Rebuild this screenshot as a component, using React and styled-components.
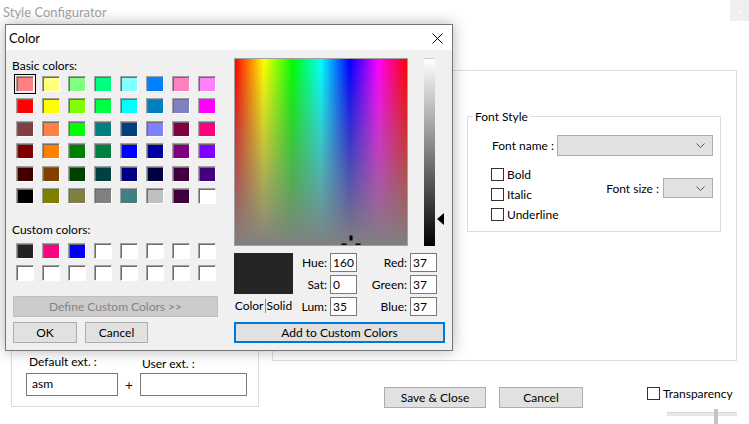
import React from "react";
import styled, { createGlobalStyle } from "styled-components";

const FONT = `"Segoe UI", Lato, "Noto Sans", sans-serif`;

const GlobalStyle = createGlobalStyle`
  html, body { margin: 0; padding: 0; background: #fff; }
  * { box-sizing: border-box; }
`;

const basicColors = [
  "#ff8080", "#ffff80", "#80ff80", "#00ff80", "#80ffff", "#0080ff", "#ff80c0", "#ff80ff",
  "#ff0000", "#ffff00", "#80ff00", "#00ff40", "#00ffff", "#0080c0", "#8080c0", "#ff00ff",
  "#804040", "#ff8040", "#00ff00", "#008080", "#004080", "#8080ff", "#800040", "#ff0080",
  "#800000", "#ff8000", "#008000", "#008040", "#0000ff", "#0000a0", "#800080", "#8000ff",
  "#400000", "#804000", "#004000", "#004040", "#000080", "#000040", "#400040", "#400080",
  "#000000", "#808000", "#808040", "#808080", "#408080", "#c0c0c0", "#400040", "#ffffff",
];

const customColors = [
  "#232323", "#ff0080", "#0000ff", "#fff", "#fff", "#fff", "#fff", "#fff",
  "#fff", "#fff", "#fff", "#fff", "#fff", "#fff", "#fff", "#fff",
];

const current = { hue: 160, sat: 0, lum: 35, red: 37, green: 37, blue: 37 };

/* ---------- main window ---------- */

const Window = styled.div`
  position: relative;
  width: 749px;
  height: 424px;
  overflow: hidden;
  background: #fff;
  font-family: ${FONT};
  font-size: 12px;
  color: #000;
  white-space: nowrap;
`;

const TitleBar = styled.div`
  height: 24px;
  display: flex;
  justify-content: space-between;
  align-items: flex-start;
`;

const Title = styled.div`
  padding: 3px 0 0 3px;
  font-size: 13px;
  line-height: 18px;
  color: #a3a3a3;
`;

const CloseSquare = styled.div`
  width: 19px;
  height: 21px;
  background: #efefef;
  color: #fbfbfb;
  font-size: 10px;
  display: flex;
  align-items: center;
  justify-content: center;
`;

const Content = styled.div`
  display: flex;
  gap: 13px;
  padding: 46px 0 0 11px;
`;

const LeftPanel = styled.div`
  width: 248px;
  height: 337px;
  border: 1px solid #dcdcdc;
  display: flex;
  align-items: flex-end;
  padding: 0 0 10px 14px;
`;

const ExtRow = styled.div`
  display: flex;
  align-items: flex-end;
`;

const ExtField = styled.div`
  display: flex;
  flex-direction: column;
`;

const ExtLabel = styled.div`
  line-height: 15px;
  padding-left: ${(p) => p.$indent}px;
  margin-bottom: ${(p) => p.$gap}px;
`;

const TextBox = styled.div`
  width: ${(p) => p.$w}px;
  height: 23px;
  border: 1px solid #7a7a7a;
  background: #fff;
  padding-left: 5px;
  line-height: 19px;
`;

const Plus = styled.div`
  width: 22px;
  height: 23px;
  display: flex;
  align-items: center;
  justify-content: center;
  font-size: 13px;
`;

const RightColumn = styled.div`
  display: flex;
  flex-direction: column;
`;

const RightPanel = styled.div`
  width: 465px;
  height: 291px;
  border: 1px solid #dcdcdc;
  display: flex;
  justify-content: flex-end;
  align-items: flex-start;
  padding: 38px 15px 0 0;
`;

const GroupBox = styled.fieldset`
  margin: 0;
  width: 254px;
  border: 1px solid #dcdcdc;
  padding: 11px 7px 10px 5px;
  min-width: 0;
`;

const Legend = styled.legend`
  padding: 0 2px;
  line-height: 15px;
`;

const GroupContent = styled.div`
  padding-left: 18px;
`;

const FieldRow = styled.div`
  display: flex;
  align-items: ${(p) => p.$align || "center"};
  margin-top: ${(p) => p.$top || 0}px;
`;

const Combo = styled.div`
  width: ${(p) => p.$w}px;
  height: ${(p) => p.$h}px;
  margin-left: auto;
  background: #e1e1e1;
  border: 1px solid #adadad;
  display: flex;
  justify-content: flex-end;
  align-items: center;
  padding-right: 7px;
`;

const CheckList = styled.div`
  display: flex;
  flex-direction: column;
  gap: 7px;
`;

const CheckItem = styled.div`
  display: flex;
  align-items: center;
  gap: 3px;
  line-height: 15px;
  height: 13px;
`;

const CheckBox = styled.div`
  width: 13px;
  height: 13px;
  border: 1px solid #333;
  background: #fff;
`;

const SizeGroup = styled.div`
  margin-left: auto;
  margin-top: 10px;
  display: flex;
  align-items: center;
  gap: 4px;
`;

const Footer = styled.div`
  display: flex;
  align-items: flex-start;
  margin-top: 26px;
  padding-left: 112px;
  gap: 13px;
`;

const Button = styled.div`
  width: ${(p) => p.$w}px;
  height: 21px;
  background: ${(p) => (p.$disabled ? "#cccccc" : "#e1e1e1")};
  border: ${(p) => (p.$focus ? "2px solid #0078d7" : `1px solid ${p.$disabled ? "#bfbfbf" : "#adadad"}`)};
  color: ${(p) => (p.$disabled ? "#838383" : "#000")};
  display: flex;
  align-items: center;
  justify-content: center;
  line-height: 15px;
`;

const Transparency = styled.div`
  margin-left: auto;
  width: 90px;
  display: flex;
  flex-direction: column;
`;

const Slider = styled.div`
  position: relative;
  margin: 12px 0 0 20px;
  width: 70px;
  height: 4px;
  background: #e7e7e7;
  border-top: 1px solid #d8d8d8;
`;

const SliderThumb = styled.div`
  position: absolute;
  left: 47px;
  top: -4px;
  width: 4px;
  height: 16px;
  background: #c4c4c4;
`;

/* ---------- color dialog ---------- */

const Dialog = styled.div`
  position: absolute;
  left: 5px;
  top: 24px;
  width: 448px;
  height: 327px;
  background: #f0f0f0;
  border: 1px solid #767676;
  box-shadow: 0 0 14px rgba(0, 0, 0, 0.3);
  display: flex;
  flex-direction: column;
`;

const DialogTitle = styled.div`
  height: 25px;
  background: #fff;
  display: flex;
  align-items: center;
  justify-content: space-between;
  padding: 1px 9px 0 3px;
  font-size: 13px;
`;

const DialogBody = styled.div`
  display: flex;
  gap: 16px;
  padding: 8px 6px 0 6px;
`;

const LeftCol = styled.div`
  width: 206px;
  display: flex;
  flex-direction: column;
`;

const SectionLabel = styled.div`
  line-height: 15px;
  margin-top: ${(p) => p.$top || 0}px;
`;

const SwatchGrid = styled.div`
  display: grid;
  grid-template-columns: repeat(8, 18px);
  grid-auto-rows: 16px;
  column-gap: 8px;
  row-gap: ${(p) => p.$rowGap}px;
  margin: ${(p) => p.$top}px 0 0 4px;
`;

const Swatch = styled.div`
  background: ${(p) => p.$color};
  border: 1px solid;
  border-color: #a0a0a0 #fff #fff #a0a0a0;
  box-shadow: inset 1px 1px 0 #6d6d6d;
  outline: ${(p) => (p.$selected ? "1px solid #000" : "none")};
  outline-offset: 1px;
`;

const ButtonRow = styled.div`
  display: flex;
  gap: 8px;
  margin: ${(p) => p.$top}px 0 0 1px;
`;

const RightCol = styled.div`
  width: 212px;
  display: flex;
  flex-direction: column;
`;

const PickerRow = styled.div`
  display: flex;
  align-items: flex-start;
`;

const Spectrum = styled.div`
  position: relative;
  width: 176px;
  height: 188px;
  border: 1px solid #a0a0a0;
  overflow: hidden;
  background:
    linear-gradient(to bottom, rgba(128, 128, 128, 0), #808080),
    linear-gradient(to right, #ff0000, #ffff00 16.7%, #00ff00 33.3%, #00ffff 50%, #0000ff 66.7%, #ff00ff 83.3%, #ff0000);
`;

const Crosshair = styled.svg`
  position: absolute;
  width: 20px;
  height: 20px;
`;

const LumTrack = styled.div`
  position: relative;
  margin-left: 16px;
  width: 22px;
  height: 188px;
`;

const LumBar = styled.div`
  width: 11px;
  height: 188px;
  border-top: 1px solid #d0d0d0;
  background: linear-gradient(to bottom, #ffffff, #000000);
`;

const LumArrow = styled.div`
  position: absolute;
  left: 13px;
  width: 0;
  height: 0;
  border-top: 6px solid transparent;
  border-bottom: 6px solid transparent;
  border-right: 7px solid #000;
`;

const Fields = styled.div`
  display: grid;
  grid-template-columns: 59px 37px 27px 53px 27px;
  grid-template-rows: 19px 19px 19px;
  row-gap: 3px;
  margin-top: 7px;
`;

const Preview = styled.div`
  grid-column: 1;
  grid-row: 1 / span 2;
  background: #252525;
`;

const PreviewLabel = styled.div`
  grid-column: 1;
  grid-row: 3;
  display: flex;
  justify-content: center;
  align-items: center;
  line-height: 15px;
  margin-top: -2px;
`;

const Split = styled.span`
  display: inline-block;
  width: 1px;
  height: 14px;
  margin: 0 1px;
  background: #4a9ee0;
`;

const FieldLabel = styled.div`
  text-align: right;
  padding-right: 3px;
  line-height: 19px;
`;

const FieldInput = styled.div`
  border: 1px solid #7a7a7a;
  background: #fff;
  padding-left: 2px;
  line-height: 17px;
`;

const Chevron = () => (
  <svg width="9" height="5" viewBox="0 0 9 5">
    <polyline points="0.5,0.5 4.5,4.5 8.5,0.5" fill="none" stroke="#555" strokeWidth="1" />
  </svg>
);

const CloseIcon = () => (
  <svg width="11" height="11" viewBox="0 0 11 11">
    <path d="M0.5 0.5 L10.5 10.5 M10.5 0.5 L0.5 10.5" stroke="#000" strokeWidth="1" fill="none" />
  </svg>
);

const ColorDialog = () => {
  const crossX = (current.hue / 240) * 174;
  const crossY = 186 - (current.sat / 240) * 186;
  const arrowTop = 188 - (current.lum / 240) * 188 - 6;

  const hsl = [
    ["Hue:", current.hue, "Red:", current.red],
    ["Sat:", current.sat, "Green:", current.green],
    ["Lum:", current.lum, "Blue:", current.blue],
  ];

  return (
    <Dialog>
      <DialogTitle>
        <span>Color</span>
        <CloseIcon />
      </DialogTitle>
      <DialogBody>
        <LeftCol>
          <SectionLabel>Basic colors:</SectionLabel>
          <SwatchGrid $top={3} $rowGap={6.4}>
            {basicColors.map((c, i) => (
              <Swatch key={i} $color={c} $selected={i === 0} />
            ))}
          </SwatchGrid>
          <SectionLabel $top={18.5}>Custom colors:</SectionLabel>
          <SwatchGrid $top={5.5} $rowGap={6}>
            {customColors.map((c, i) => (
              <Swatch key={i} $color={c} />
            ))}
          </SwatchGrid>
          <ButtonRow $top={15}>
            <Button $w={205} $disabled>
              Define Custom Colors &gt;&gt;
            </Button>
          </ButtonRow>
          <ButtonRow $top={5}>
            <Button $w={64}>OK</Button>
            <Button $w={63}>Cancel</Button>
          </ButtonRow>
        </LeftCol>
        <RightCol>
          <PickerRow>
            <Spectrum>
              <Crosshair viewBox="0 0 20 20" style={{ left: crossX - 10, top: crossY - 10 }}>
                <rect x="8.5" y="0.5" width="3" height="5" fill="#000" />
                <rect x="0.5" y="8.5" width="5" height="3" fill="#000" />
                <rect x="14.5" y="8.5" width="5" height="3" fill="#000" />
                <rect x="8.5" y="14.5" width="3" height="5" fill="#000" />
              </Crosshair>
            </Spectrum>
            <LumTrack>
              <LumBar />
              <LumArrow style={{ top: arrowTop }} />
            </LumTrack>
          </PickerRow>
          <Fields>
            <Preview />
            <PreviewLabel>
              Color<Split />Solid
            </PreviewLabel>
            {hsl.map(([l1, v1, l2, v2], r) => (
              <React.Fragment key={l1}>
                <FieldLabel style={{ gridRow: r + 1, gridColumn: 2 }}>{l1}</FieldLabel>
                <FieldInput style={{ gridRow: r + 1, gridColumn: 3 }}>{v1}</FieldInput>
                <FieldLabel style={{ gridRow: r + 1, gridColumn: 4 }}>{l2}</FieldLabel>
                <FieldInput style={{ gridRow: r + 1, gridColumn: 5 }}>{v2}</FieldInput>
              </React.Fragment>
            ))}
          </Fields>
          <ButtonRow $top={6}>
            <Button $w={211} $focus style={{ marginLeft: -1 }}>
              Add to Custom Colors
            </Button>
          </ButtonRow>
        </RightCol>
      </DialogBody>
    </Dialog>
  );
};

export default function App() {
  return (
    <>
      <GlobalStyle />
      <Window>
        <TitleBar>
          <Title>Style Configurator</Title>
          <CloseSquare>x</CloseSquare>
        </TitleBar>
        <Content>
          <LeftPanel>
            <ExtRow>
              <ExtField>
                <ExtLabel $indent={3} $gap={4}>Default ext. :</ExtLabel>
                <TextBox $w={92}>asm</TextBox>
              </ExtField>
              <Plus>+</Plus>
              <ExtField>
                <ExtLabel $indent={2} $gap={2}>User ext. :</ExtLabel>
                <TextBox $w={107} />
              </ExtField>
            </ExtRow>
          </LeftPanel>
          <RightColumn>
            <RightPanel>
              <GroupBox>
                <Legend>Font Style</Legend>
                <GroupContent>
                  <FieldRow>
                    <span style={{ marginLeft: 1 }}>Font name :</span>
                    <Combo $w={156} $h={21}>
                      <Chevron />
                    </Combo>
                  </FieldRow>
                  <FieldRow $align="flex-start" $top={12}>
                    <CheckList>
                      <CheckItem><CheckBox />Bold</CheckItem>
                      <CheckItem><CheckBox />Italic</CheckItem>
                      <CheckItem><CheckBox />Underline</CheckItem>
                    </CheckList>
                    <SizeGroup>
                      <span>Font size :</span>
                      <Combo $w={50} $h={20}>
                        <Chevron />
                      </Combo>
                    </SizeGroup>
                  </FieldRow>
                </GroupContent>
              </GroupBox>
            </RightPanel>
            <Footer>
              <Button $w={102}>Save &amp; Close</Button>
              <Button $w={84}>Cancel</Button>
              <Transparency>
                <CheckItem>
                  <CheckBox />
                  Transparency
                </CheckItem>
                <Slider>
                  <SliderThumb />
                </Slider>
              </Transparency>
            </Footer>
          </RightColumn>
        </Content>
        <ColorDialog />
      </Window>
    </>
  );
}
